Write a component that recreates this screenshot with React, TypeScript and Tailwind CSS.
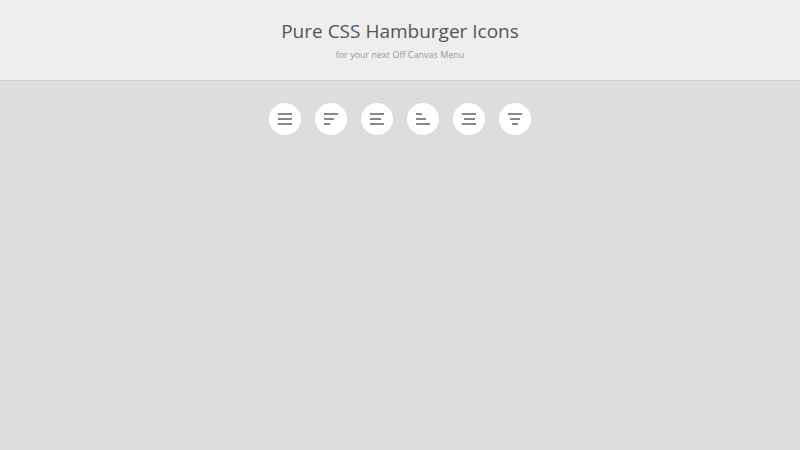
import React from "react";

type Line = { w: string; align: string };

const icons: Line[][] = [
  [
    { w: "w-[14px]", align: "self-center" },
    { w: "w-[14px]", align: "self-center" },
    { w: "w-[14px]", align: "self-center" },
  ],
  [
    { w: "w-[14px]", align: "self-start" },
    { w: "w-[10px]", align: "self-start" },
    { w: "w-[6px]", align: "self-start" },
  ],
  [
    { w: "w-[14px]", align: "self-start" },
    { w: "w-[11px]", align: "self-start" },
    { w: "w-[14px]", align: "self-start" },
  ],
  [
    { w: "w-[6px]", align: "self-start" },
    { w: "w-[10px]", align: "self-start" },
    { w: "w-[14px]", align: "self-start" },
  ],
  [
    { w: "w-[14px]", align: "self-center" },
    { w: "w-[11px]", align: "self-center" },
    { w: "w-[14px]", align: "self-center" },
  ],
  [
    { w: "w-[14px]", align: "self-center" },
    { w: "w-[10px]", align: "self-center" },
    { w: "w-[6px]", align: "self-center" },
  ],
];

export default function App() {
  return (
    <div
      className="w-[800px] h-[450px] bg-[#dddddd] flex flex-col"
      style={{ fontFamily: '"Open Sans", "Liberation Sans", sans-serif' }}
    >
      <header className="h-[81px] bg-[#eeeeee] border-b border-[#cfcfcf] flex flex-col items-center pt-[18px]">
        <h1 className="text-[19px] leading-[26px] text-[#555555] font-normal">
          Pure CSS Hamburger Icons
        </h1>
        <p className="text-[9px] leading-[12px] text-[#999999] mt-[5px]">
          for your next Off Canvas Menu
        </p>
      </header>
      <div className="flex justify-center gap-[14px] mt-[22px]">
        {icons.map((lines, i) => (
          <div
            key={i}
            className="w-[32px] h-[32px] rounded-full bg-white flex items-center justify-center"
          >
            <div className="w-[14px] flex flex-col gap-[3px]">
              {lines.map((l, j) => (
                <span
                  key={j}
                  className={`block h-[2px] bg-[#888888] ${l.w} ${l.align}`}
                />
              ))}
            </div>
          </div>
        ))}
      </div>
    </div>
  );
}
